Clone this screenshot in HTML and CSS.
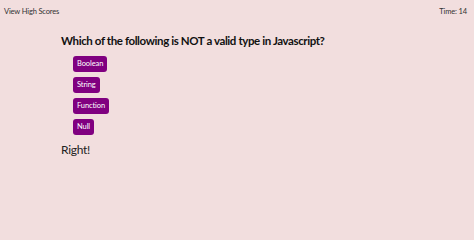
FILE: index.html
```html
<!DOCTYPE html>
<html>
<head>
<meta charset="utf-8">
<link rel="stylesheet" href="styles.css">
</head>
<body>
<header class="topbar">
  <a class="scores">View High Scores</a>
  <span class="timer">Time: 14</span>
</header>
<main class="quiz">
  <h1 class="question">Which of the following is NOT a valid type in Javascript?</h1>
  <ul class="choices">
    <li><button class="choice">Boolean</button></li>
    <li><button class="choice">String</button></li>
    <li><button class="choice">Function</button></li>
    <li><button class="choice">Null</button></li>
  </ul>
  <p class="result">Right!</p>
</main>
</body>
</html>
```
FILE: styles.css
```css
html, body {
  margin: 0;
  padding: 0;
  background: #f2dede;
  font-family: Lato, "Open Sans", sans-serif;
  color: #222;
}
.topbar {
  display: flex;
  justify-content: space-between;
  padding: 7px 7px 0 4px;
  font-size: 7.5px;
  line-height: 9px;
  letter-spacing: -0.15px;
  color: #333;
}
.quiz {
  padding: 18px 0 0 61px;
}
.question {
  margin: 0;
  font-size: 11.5px;
  font-weight: 700;
  line-height: 14px;
  letter-spacing: -0.4px;
  color: #111;
}
.choices {
  list-style: none;
  margin: 0;
  padding: 8px 0 0 12px;
  display: flex;
  flex-direction: column;
  align-items: flex-start;
  gap: 5px;
}
.choices li {
  display: block;
}
.choice {
  display: block;
  font-family: inherit;
  font-size: 7.5px;
  letter-spacing: -0.1px;
  background: #800080;
  color: #fff;
  border: none;
  border-radius: 3px;
  height: 16px;
  padding: 0 4px;
  line-height: 16px;
}
.result {
  margin: 8px 0 0 0;
  font-size: 12px;
  line-height: 14px;
  letter-spacing: -0.3px;
  color: #222;
}
```
